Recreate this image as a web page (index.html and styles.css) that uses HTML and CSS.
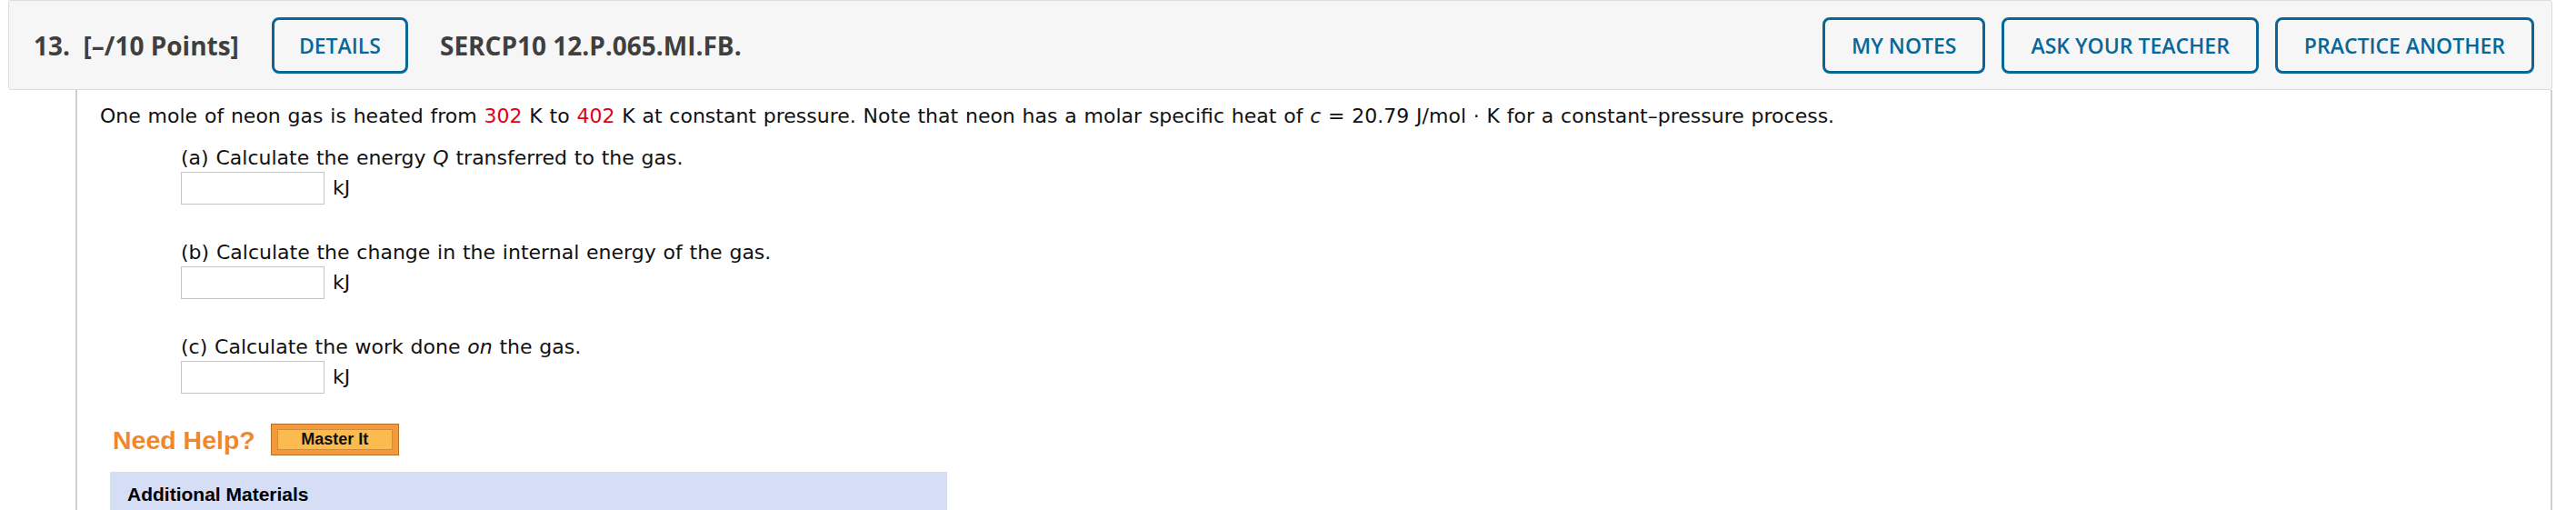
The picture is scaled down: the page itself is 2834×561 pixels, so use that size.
FILE: index.html
```html
<!DOCTYPE html>
<html lang="en">
<head>
    <meta charset="UTF-8">
    <title>Question 13</title>
    <link rel="stylesheet" href="styles.css">
</head>
<body>

<div class="question">
    <div class="q-header">
        <span class="q-number">13.&nbsp; [–/10 Points]</span>
        <button class="hdr-btn details">DETAILS</button>
        <span class="q-code">SERCP10 12.P.065.MI.FB.</span>
        <div class="hdr-actions">
            <button class="hdr-btn">MY NOTES</button>
            <button class="hdr-btn">ASK YOUR TEACHER</button>
            <button class="hdr-btn">PRACTICE ANOTHER</button>
        </div>
    </div>

    <div class="q-body">
        <p class="q-text">One mole of neon gas is heated from <span class="val">302</span> K to <span class="val">402</span> K at constant pressure. Note that neon has a molar specific heat of <i>c</i> = 20.79 J/mol · K for a constant–pressure process.</p>

        <div class="part">
            <p class="prompt">(a) Calculate the energy <i>Q</i> transferred to the gas.</p>
            <div class="answer"><input type="text"><span class="unit">kJ</span></div>
        </div>

        <div class="part">
            <p class="prompt">(b) Calculate the change in the internal energy of the gas.</p>
            <div class="answer"><input type="text"><span class="unit">kJ</span></div>
        </div>

        <div class="part">
            <p class="prompt">(c) Calculate the work done <i>on</i> the gas.</p>
            <div class="answer"><input type="text"><span class="unit">kJ</span></div>
        </div>

        <div class="help">
            <div class="help-row">
                <span class="need-help">Need Help?</span>
                <button class="master-btn"><span>Master It</span></button>
            </div>
            <div class="materials">Additional Materials</div>
        </div>
    </div>
</div>

</body>
</html>
```

FILE: styles.css
```css
* {
    margin: 0;
    padding: 0;
    box-sizing: border-box;
}

body {
    background-color: #fff;
    color: #111;
    font-family: "DejaVu Sans", Verdana, sans-serif;
}

.question {
    padding: 0 26px 0 9px;
}

/* barre du haut */
.q-header {
    display: flex;
    align-items: center;
    height: 99px;
    padding: 0 19px 0 27px;
    background-color: #f6f6f6;
    border: 1px solid #dcdcdc;
    border-radius: 3px;
    font-family: "Open Sans", sans-serif;
    color: #3f3f3f;
}

.q-number, .q-code {
    font-size: 28px;
    font-weight: 700;
}

.q-number {
    margin-right: 36px;
}

.q-code {
    margin-left: 35px;
}

.hdr-btn {
    height: 62px;
    padding: 0 29px;
    background-color: transparent;
    border: 3px solid #0a6697;
    border-radius: 8px;
    color: #0a6697;
    font-family: "Open Sans", sans-serif;
    font-size: 23px;
    font-weight: 600;
    cursor: pointer;
}

.hdr-btn.details {
    padding: 0 27px;
}

.hdr-actions {
    display: flex;
    gap: 18px;
    margin-left: auto;
}

/* contenu de la question */
.q-body {
    margin-left: 74px;
    padding: 16px 0 0 25px;
    border-left: 2px solid #cfcfcf;
    border-right: 2px solid #cfcfcf;
    height: 462px;
    font-size: 22px;
    line-height: 26px;
    word-spacing: 0.8px;
}

.val {
    color: #e2001a;
}

.part {
    margin-left: 89px;
}

.q-text + .part {
    margin-top: 20px;
}

.part + .part {
    margin-top: 40px;
}

.answer {
    display: flex;
    align-items: center;
    gap: 9px;
    margin-top: 2px;
}

.answer input {
    width: 158px;
    height: 36px;
    border: 1px solid #c4c4c4;
    background-color: #fff;
}

.help {
    margin: 33px 0 0 11px;
    font-family: "Liberation Sans", Arial, sans-serif;
    word-spacing: 0;
}

.help-row {
    display: flex;
    align-items: center;
    gap: 17px;
    padding-left: 3px;
}

.need-help {
    color: #f0882a;
    font-size: 28.5px;
    font-weight: 700;
}

.master-btn {
    width: 141px;
    height: 35px;
    padding: 5px 6px;
    background-color: #f49a3b;
    border: 1px solid #b2702e;
    cursor: pointer;
}

.master-btn span {
    display: block;
    height: 100%;
    background-color: #fbbb4f;
    border: 1px solid #cf8a3c;
    font-family: "Liberation Sans", Arial, sans-serif;
    font-size: 18px;
    font-weight: 700;
    line-height: 21px;
    color: #111;
}

.materials {
    width: 921px;
    margin-top: 18px;
    padding: 12px 19px 14px;
    background-color: #d6def5;
    font-size: 21px;
    font-weight: 700;
    color: #000;
}
```
